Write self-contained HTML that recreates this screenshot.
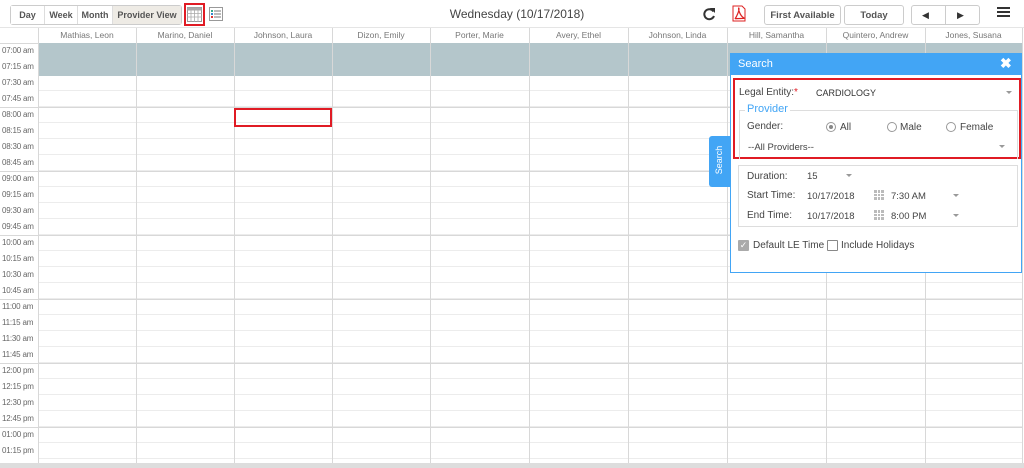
<!DOCTYPE html>
<html><head><meta charset="utf-8"><style>
*{box-sizing:border-box;margin:0;padding:0}
body{width:1024px;height:468px;overflow:hidden;background:#fff;font-family:"Liberation Sans",sans-serif;position:relative;color:#333}
.abs{position:absolute;white-space:nowrap}
.btn{position:absolute;border:1px solid #ccc;background:#fff;font-size:9px;font-weight:bold;color:#555;display:flex;align-items:center;justify-content:center;white-space:nowrap}
.hdr{position:absolute;top:28px;height:15px;font-size:8.5px;color:#777;text-align:center;line-height:15px;white-space:nowrap}
.t{position:absolute;left:0;width:38px;font-size:8px;color:#666;text-align:left;padding-left:2px;height:16px;line-height:16px;white-space:nowrap;overflow:hidden;letter-spacing:-0.2px}
.vl{position:absolute;top:28px;width:1px;height:435px;background:#d8d8d8}
.p{font-family:"Liberation Sans",sans-serif;font-size:10px;color:#444}
</style></head><body>
<div class="abs" style="left:10px;top:5px;width:172px;height:20px;border:1px solid #ccc;border-radius:3px"></div>
<div class="btn" style="left:11px;top:6px;width:34px;height:18px;border:none;border-right:1px solid #ddd">Day</div>
<div class="btn" style="left:45px;top:6px;width:33px;height:18px;border:none;border-right:1px solid #ddd">Week</div>
<div class="btn" style="left:78px;top:6px;width:35px;height:18px;border:none;border-right:1px solid #ddd">Month</div>
<div class="btn" style="left:113px;top:6px;width:68px;height:18px;border:none;background:#eeebe5;color:#555">Provider View</div>
<div class="abs" style="left:184px;top:3px;width:21px;height:23px;border:2px solid #e01b24"></div>
<svg class="abs" style="left:187px;top:7px" width="15" height="15"><rect x="0.5" y="0.5" width="14" height="14" fill="#fff" stroke="#999"/><rect x="0.5" y="0.5" width="14" height="3" fill="#aaa"/><path d="M4 3v12M7.5 3v12M11 3v12M0 6.5h15M0 10h15" stroke="#aaa" stroke-width="0.8"/></svg>
<svg class="abs" style="left:209px;top:7px" width="14" height="14"><rect x="0.5" y="0.5" width="13" height="13" fill="#fff" stroke="#999"/><rect x="2" y="3" width="2" height="2" fill="#3a8"/><rect x="2" y="6" width="2" height="2" fill="#38c"/><rect x="2" y="9" width="2" height="2" fill="#d33"/><path d="M5 4h7M5 7h7M5 10h7" stroke="#777"/></svg>
<div class="abs" style="left:0;top:7px;width:1024px;text-align:center;font-size:12px;color:#444;padding-left:10px">Wednesday (10/17/2018)</div>
<svg class="abs" style="left:702px;top:7px" width="14" height="14"><path d="M11.5 4.5A5 5 0 1 0 12 9" fill="none" stroke="#333" stroke-width="2"/><path d="M8 1h5v5z" fill="#333"/></svg>
<svg class="abs" style="left:732px;top:5px" width="14" height="17"><path d="M1 1h9l3 3v12H1z" fill="#fff" stroke="#d22"/><path d="M3 14c2-3 4-8 4-10s-1-1 0 2 3 6 5 7-8 0-9 1z" fill="none" stroke="#d22" stroke-width="1.2"/></svg>
<div class="btn" style="left:764px;top:5px;width:77px;height:20px;border-radius:3px;font-size:9.5px">First Available</div>
<div class="btn" style="left:844px;top:5px;width:60px;height:20px;border-radius:3px;font-size:9.5px">Today</div>
<div class="btn" style="left:911px;top:5px;width:69px;height:20px;border-radius:3px"></div>
<div class="abs" style="left:945px;top:5px;width:1px;height:20px;background:#ccc"></div>
<div class="abs" style="left:922px;top:10px;font-size:9px;color:#333">&#9664;</div>
<div class="abs" style="left:957px;top:10px;font-size:9px;color:#333">&#9654;</div>
<div class="abs" style="left:997px;top:7px;width:13px;height:2px;background:#333;box-shadow:0 4px 0 #333,0 8px 0 #333"></div>
<div class="abs" style="left:0;top:27px;width:1024px;height:1px;background:#e5e5e5"></div>
<div class="abs" style="left:38px;top:43px;width:985px;height:420px;background:repeating-linear-gradient(to bottom,transparent 0,transparent 15px,#ececec 15px,#ececec 16px)"></div>
<div class="abs" style="left:0;top:43px;width:1023px;height:420px;background:repeating-linear-gradient(to bottom,#d8d8d8 0,#d8d8d8 1px,transparent 1px,transparent 64px)"></div>
<div class="abs" style="left:38px;top:43px;width:985px;height:33px;background:#b4c6cb"></div>
<div class="abs" style="left:0;top:463px;width:1024px;height:5px;background:#ddd"></div>
<div class="vl" style="left:38px"></div><div class="vl" style="left:136px"></div><div class="vl" style="left:234px"></div><div class="vl" style="left:332px"></div><div class="vl" style="left:430px"></div><div class="vl" style="left:529px"></div><div class="vl" style="left:628px"></div><div class="vl" style="left:727px"></div><div class="vl" style="left:826px"></div><div class="vl" style="left:925px"></div><div class="vl" style="left:1022px"></div>
<div class="hdr" style="left:38px;width:98px">Mathias, Leon</div>
<div class="hdr" style="left:136px;width:98px">Marino, Daniel</div>
<div class="hdr" style="left:234px;width:98px">Johnson, Laura</div>
<div class="hdr" style="left:332px;width:98px">Dizon, Emily</div>
<div class="hdr" style="left:430px;width:99px">Porter, Marie</div>
<div class="hdr" style="left:529px;width:99px">Avery, Ethel</div>
<div class="hdr" style="left:628px;width:99px">Johnson, Linda</div>
<div class="hdr" style="left:727px;width:99px">Hill, Samantha</div>
<div class="hdr" style="left:826px;width:99px">Quintero, Andrew</div>
<div class="hdr" style="left:925px;width:97px">Jones, Susana</div>
<div class="t" style="top:43px">07:00 am</div><div class="t" style="top:59px">07:15 am</div><div class="t" style="top:75px">07:30 am</div><div class="t" style="top:91px">07:45 am</div>
<div class="t" style="top:107px">08:00 am</div><div class="t" style="top:123px">08:15 am</div><div class="t" style="top:139px">08:30 am</div><div class="t" style="top:155px">08:45 am</div>
<div class="t" style="top:171px">09:00 am</div><div class="t" style="top:187px">09:15 am</div><div class="t" style="top:203px">09:30 am</div><div class="t" style="top:219px">09:45 am</div>
<div class="t" style="top:235px">10:00 am</div><div class="t" style="top:251px">10:15 am</div><div class="t" style="top:267px">10:30 am</div><div class="t" style="top:283px">10:45 am</div>
<div class="t" style="top:299px">11:00 am</div><div class="t" style="top:315px">11:15 am</div><div class="t" style="top:331px">11:30 am</div><div class="t" style="top:347px">11:45 am</div>
<div class="t" style="top:363px">12:00 pm</div><div class="t" style="top:379px">12:15 pm</div><div class="t" style="top:395px">12:30 pm</div><div class="t" style="top:411px">12:45 pm</div>
<div class="t" style="top:427px">01:00 pm</div><div class="t" style="top:443px">01:15 pm</div>
<div class="abs" style="left:234px;top:108px;width:98px;height:19px;border:2px solid #e01b24"></div>
<div class="abs" style="left:709px;top:136px;width:21px;height:51px;background:#42a5f5;border-radius:3px 0 0 3px"></div>
<div class="abs" style="left:704px;top:155px;width:30px;transform:rotate(-90deg);color:#fff;font-size:9px;text-align:center">Search</div>
<div class="abs" style="left:730px;top:53px;width:292px;height:220px;background:#fff;border:1px solid #42a5f5"></div>
<div class="abs" style="left:730px;top:53px;width:292px;height:22px;background:#42a5f5;color:#fff;font-size:11px;padding:5px 0 0 8px">Search</div>
<div class="abs" style="left:1000px;top:55px;color:#fff;font-size:14px;font-weight:bold">&#x2716;</div>
<div class="abs" style="left:733px;top:78px;width:288px;height:81px;border:2px solid #e01b24"></div>
<div class="abs p" style="left:739px;top:87px">Legal Entity:<span style="color:#e01b24">*</span></div>
<div class="abs p" style="left:816px;top:88px;font-size:9px;color:#333">CARDIOLOGY</div>
<div class="abs" style="left:1006px;top:91px;border:3px solid transparent;border-top-color:#999"></div>
<div class="abs" style="left:739px;top:110px;width:279px;height:49px;border:1px solid #ddd;border-bottom:none"></div>
<div class="abs" style="left:745px;top:103px;background:#fff;padding:0 2px;color:#42a5f5;font-size:11px">Provider</div>
<div class="abs p" style="left:747px;top:121px">Gender:</div>
<div class="abs" style="left:826px;top:122px;width:10px;height:10px;border:1px solid #999;border-radius:50%;background:#fff"><div style="margin:2px;width:4px;height:4px;border-radius:50%;background:#888"></div></div>
<div class="abs p" style="left:840px;top:122px">All</div>
<div class="abs" style="left:887px;top:122px;width:10px;height:10px;border:1px solid #999;border-radius:50%"></div>
<div class="abs p" style="left:900px;top:122px">Male</div>
<div class="abs" style="left:946px;top:122px;width:10px;height:10px;border:1px solid #999;border-radius:50%"></div>
<div class="abs p" style="left:960px;top:122px">Female</div>
<div class="abs p" style="left:748px;top:142px;font-size:9.5px">--All Providers--</div>
<div class="abs" style="left:999px;top:145px;border:3px solid transparent;border-top-color:#999"></div>
<div class="abs" style="left:738px;top:165px;width:280px;height:62px;border:1px solid #ddd"></div>
<div class="abs p" style="left:747px;top:171px">Duration:</div>
<div class="abs p" style="left:807px;top:171px;font-size:9.5px">15</div>
<div class="abs" style="left:846px;top:174px;border:3px solid transparent;border-top-color:#999"></div>
<div class="abs p" style="left:747px;top:190px">Start Time:</div>
<div class="abs p" style="left:807px;top:191px;font-size:9.5px">10/17/2018</div>
<svg class="abs" style="left:874px;top:190px" width="10" height="10"><rect width="10" height="10" fill="#bbb"/><path d="M0 3.5h10M0 6.5h10M3.5 0v10M6.5 0v10" stroke="#fff" stroke-width="1"/></svg>
<div class="abs p" style="left:891px;top:191px;font-size:9.5px">7:30 AM</div>
<div class="abs" style="left:953px;top:194px;border:3px solid transparent;border-top-color:#999"></div>
<div class="abs p" style="left:747px;top:210px">End Time:</div>
<div class="abs p" style="left:807px;top:211px;font-size:9.5px">10/17/2018</div>
<svg class="abs" style="left:874px;top:210px" width="10" height="10"><rect width="10" height="10" fill="#bbb"/><path d="M0 3.5h10M0 6.5h10M3.5 0v10M6.5 0v10" stroke="#fff" stroke-width="1"/></svg>
<div class="abs p" style="left:891px;top:211px;font-size:9.5px">8:00 PM</div>
<div class="abs" style="left:953px;top:214px;border:3px solid transparent;border-top-color:#999"></div>
<div class="abs" style="left:738px;top:240px;width:11px;height:11px;background:#aaa;border-radius:1px;color:#fff;font-size:9px;line-height:11px;text-align:center">&#10003;</div>
<div class="abs p" style="left:753px;top:240px">Default LE Time</div>
<div class="abs" style="left:827px;top:240px;width:11px;height:11px;border:1px solid #888;border-radius:1px"></div>
<div class="abs p" style="left:841px;top:240px">Include Holidays</div>
</body></html>
